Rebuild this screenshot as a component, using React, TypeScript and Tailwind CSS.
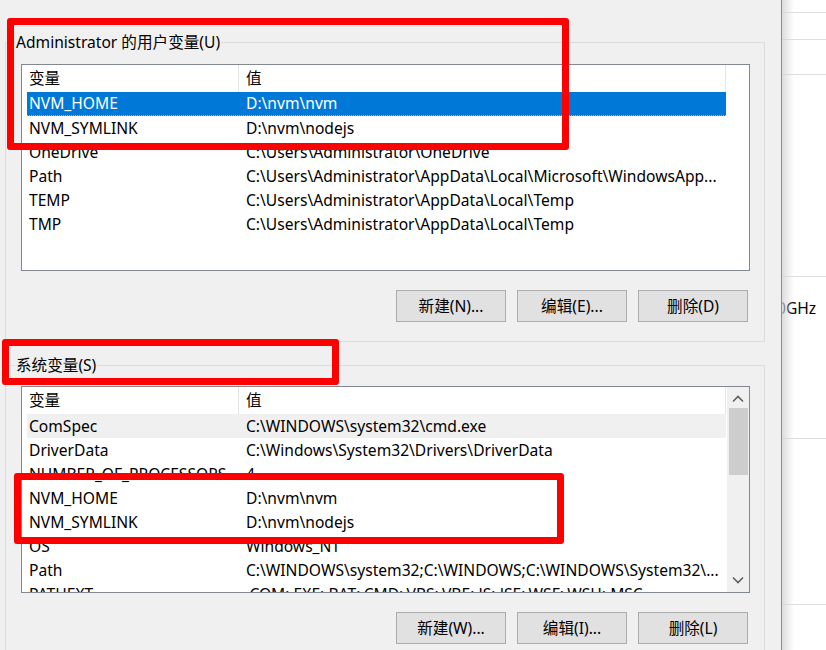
import React from 'react';

type Row = { name: string; value: string; selected?: boolean; hover?: boolean };

const userVars: Row[] = [
    { name: 'NVM_HOME', value: 'D:\\nvm\\nvm', selected: true },
    { name: 'NVM_SYMLINK', value: 'D:\\nvm\\nodejs' },
    { name: 'OneDrive', value: 'C:\\Users\\Administrator\\OneDrive' },
    { name: 'Path', value: 'C:\\Users\\Administrator\\AppData\\Local\\Microsoft\\WindowsApp...' },
    { name: 'TEMP', value: 'C:\\Users\\Administrator\\AppData\\Local\\Temp' },
    { name: 'TMP', value: 'C:\\Users\\Administrator\\AppData\\Local\\Temp' },
];

const systemVars: Row[] = [
    { name: 'ComSpec', value: 'C:\\WINDOWS\\system32\\cmd.exe', hover: true },
    { name: 'DriverData', value: 'C:\\Windows\\System32\\Drivers\\DriverData' },
    { name: 'NUMBER_OF_PROCESSORS', value: '4' },
    { name: 'NVM_HOME', value: 'D:\\nvm\\nvm' },
    { name: 'NVM_SYMLINK', value: 'D:\\nvm\\nodejs' },
    { name: 'OS', value: 'Windows_NT' },
    { name: 'Path', value: 'C:\\WINDOWS\\system32;C:\\WINDOWS;C:\\WINDOWS\\System32\\...' },
    { name: 'PATHEXT', value: '.COM;.EXE;.BAT;.CMD;.VBS;.VBE;.JS;.JSE;.WSF;.WSH;.MSC' },
];

const font = { fontFamily: '"Noto Sans", "Noto Sans CJK SC", sans-serif' };

const VarList = ({ rows, scroll }: { rows: Row[]; scroll?: boolean }) => (
    <div className="relative ml-[15px] w-[729px] h-[207px] border border-[#828790] bg-white overflow-hidden">
        <div className="flex h-[27px] items-center w-[704px]">
            <div className="w-[217px] h-full flex items-center pl-[7px] border-r border-[#e5e5e5]">变量</div>
            <div className="flex-1 h-full flex items-center pl-[7px] border-r border-[#e5e5e5]">值</div>
        </div>
        <div className="ml-[5px] w-[699px]">
            {rows.map((r) => (
                <div
                    key={r.name}
                    className={
                        r.selected
                            ? 'flex h-[24px] items-center bg-[#0078d7] text-white border-b border-dotted border-[#f4a460]'
                            : r.hover
                                ? 'flex h-[24px] items-center bg-[#f0f0f0]'
                                : 'flex h-[24px] items-center'
                    }
                >
                    <div className="w-[212px] pl-[2px] whitespace-nowrap overflow-hidden leading-[25px]">{r.name}</div>
                    <div className="flex-1 pl-[7px] whitespace-nowrap overflow-hidden leading-[25px]">{r.value}</div>
                </div>
            ))}
        </div>
        {scroll && (
            <div className="absolute right-0 top-0 bottom-0 w-[22px] bg-[#f0f0f0] flex flex-col items-center">
                <svg width="12" height="8" viewBox="0 0 12 8" className="mt-[8px]">
                    <path d="M1 6.5 L6 1.5 L11 6.5" fill="none" stroke="#606060" strokeWidth="1.6" />
                </svg>
                <div className="mt-[5px] w-[19px] h-[67px] bg-[#cdcdcd]" />
                <div className="flex-1" />
                <svg width="12" height="8" viewBox="0 0 12 8" className="mb-[8px]">
                    <path d="M1 1.5 L6 6.5 L11 1.5" fill="none" stroke="#606060" strokeWidth="1.6" />
                </svg>
            </div>
        )}
    </div>
);

const Buttons = ({ labels }: { labels: string[] }) => (
    <div className="flex gap-[11px] mt-[19px] ml-[390px]">
        {labels.map((l) => (
            <button key={l} className="w-[110px] h-[32px] bg-[#e1e1e1] border border-[#adadad] text-black leading-[30px]">
                {l}
            </button>
        ))}
    </div>
);

const App = () => {
    return (
        <div className="relative w-[826px] h-[650px] overflow-hidden flex bg-white text-[15.6px] text-black" style={font}>
            <div className="w-[782px] h-full bg-[#f0f0f0] border-r border-[#8c8c8c] pl-[5px]">
                <fieldset className="mt-[31px] w-[760px] h-[311px] border border-[#dcdcdc]">
                    <legend className="ml-[9px] px-px h-[22px] leading-[22px]">Administrator 的用户变量(U)</legend>
                    <div className="mt-[11px]">
                        <VarList rows={userVars} />
                    </div>
                    <Buttons labels={['新建(N)...', '编辑(E)...', '删除(D)']} />
                </fieldset>
                <fieldset className="mt-[12px] w-[760px] h-[320px] border border-[#dcdcdc]">
                    <legend className="ml-[9px] px-px h-[22px] leading-[22px]">系统变量(S)</legend>
                    <div className="mt-[10px]">
                        <VarList rows={systemVars} scroll />
                    </div>
                    <Buttons labels={['新建(W)...', '编辑(I)...', '删除(L)']} />
                </fieldset>
            </div>
            <div className="relative flex-1 h-full bg-white overflow-hidden">
                <div className="mt-[12px] border-t border-[#dedede]" />
                <div className="mt-[26px] border-t border-[#dedede]" />
                <div className="mt-[34px] border-t border-[#dedede]" />
                <div className="mt-[201px] border-t border-[#dedede]" />
                <div className="mt-[21px] -ml-[5px] h-[20px] leading-[20px] whitespace-nowrap">0GHz</div>
                <div className="mt-[120px] border-t border-[#dedede]" />
                <div className="mt-[165px] border-t border-[#dedede]" />
                <div className="absolute left-0 top-0 bottom-0 w-[12px] bg-gradient-to-r from-[#d4d4d4] to-transparent opacity-80" />
            </div>

            {/* red annotation boxes */}
            <div className="absolute left-[7px] top-[18px] w-[562px] h-[132px] border-[7px] border-[#ff0000] rounded-[3px]" />
            <div className="absolute left-[2px] top-[339px] w-[337px] h-[46px] border-[7px] border-[#ff0000] rounded-[3px]" />
            <div className="absolute left-[14px] top-[473px] w-[550px] h-[71px] border-[7px] border-[#ff0000] rounded-[3px]" />
        </div>
    );
};

export default App;
